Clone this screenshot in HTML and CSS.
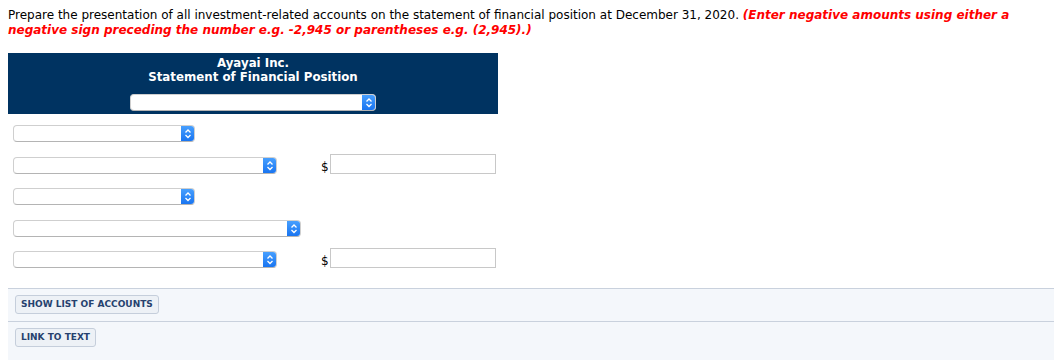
FILE: index.html
```html
<!DOCTYPE html>
<html lang="en">
<head>
    <meta charset="UTF-8">
    <title>Statement of Financial Position</title>
    <link rel="stylesheet" href="styles.css">
</head>
<body>
    <p class="instructions">
        Prepare the presentation of all investment-related accounts on the statement of financial position at December 31, 2020.
        <em class="hint">(Enter negative amounts using either a negative sign preceding the number e.g. -2,945 or parentheses e.g. (2,945).)</em>
    </p>

    <div class="statement">
        <div class="statement-head">
            <div class="company">Ayayai Inc.</div>
            <div class="title">Statement of Financial Position</div>
            <div class="select select-date"><span class="select-arrow"><svg viewBox="0 0 14 17"><path d="M4.5 7.5 7 5 9.5 7.5M4.5 10 7 12.5 9.5 10"/></svg></span></div>
        </div>

        <div class="rows">
            <div class="row">
                <div class="select w-sm"><span class="select-arrow"><svg viewBox="0 0 14 17"><path d="M4.5 7.5 7 5 9.5 7.5M4.5 10 7 12.5 9.5 10"/></svg></span></div>
            </div>
            <div class="row">
                <div class="select w-md"><span class="select-arrow"><svg viewBox="0 0 14 17"><path d="M4.5 7.5 7 5 9.5 7.5M4.5 10 7 12.5 9.5 10"/></svg></span></div>
                <span class="dollar">$</span>
                <input class="amount" type="text">
            </div>
            <div class="row">
                <div class="select w-sm"><span class="select-arrow"><svg viewBox="0 0 14 17"><path d="M4.5 7.5 7 5 9.5 7.5M4.5 10 7 12.5 9.5 10"/></svg></span></div>
            </div>
            <div class="row">
                <div class="select w-lg"><span class="select-arrow"><svg viewBox="0 0 14 17"><path d="M4.5 7.5 7 5 9.5 7.5M4.5 10 7 12.5 9.5 10"/></svg></span></div>
            </div>
            <div class="row">
                <div class="select w-md"><span class="select-arrow"><svg viewBox="0 0 14 17"><path d="M4.5 7.5 7 5 9.5 7.5M4.5 10 7 12.5 9.5 10"/></svg></span></div>
                <span class="dollar">$</span>
                <input class="amount" type="text">
            </div>
        </div>
    </div>

    <div class="toolbar">
        <div class="toolbar-row"><button class="tool-button">SHOW LIST OF ACCOUNTS</button></div>
        <div class="toolbar-row"><button class="tool-button">LINK TO TEXT</button></div>
    </div>
</body>
</html>
```

FILE: styles.css
```css
body {
    margin: 8px 0 0 8px;
    font-family: 'DejaVu Sans', Verdana, sans-serif;
    font-size: 12px;
    color: #000;
    background: #fff;
    overflow: hidden;
}

.instructions {
    margin: 0 8px 0 0;
    line-height: 15px;
}

.hint {
    color: #ff0000;
    font-weight: bold;
}

.statement {
    margin-top: 15px;
}

.statement-head {
    width: 490px;
    background: #003361;
    color: #fff;
    text-align: center;
    font-size: 11.8px;
    font-weight: bold;
    line-height: 14px;
    padding: 3px 0 3px;
    display: flex;
    flex-direction: column;
    align-items: center;
}

.select-date {
    width: 246px;
    margin-top: 10px;
}

/* mac style dropdown */
.select {
    box-sizing: border-box;
    height: 17px;
    background: #fff;
    border: 1px solid #cfcfcf;
    border-bottom-color: #b4b4b4;
    border-radius: 4px;
    display: flex;
    justify-content: flex-end;
    overflow: hidden;
}

.select-arrow {
    width: 14px;
    height: 17px;
    margin: -1px -1px 0 0;
    background: linear-gradient(#4aa2ff, #1672f0);
    border-radius: 0 4px 4px 0;
    display: flex;
}

.select-arrow svg {
    width: 14px;
    height: 17px;
    fill: none;
    stroke: #fff;
    stroke-width: 1.3;
}

.w-sm { width: 182px; }
.w-md { width: 264px; }
.w-lg { width: 288px; }

.rows {
    padding: 4px 0 0 5px;
}

.row {
    height: 31.5px;
    display: grid;
    grid-template-columns: 308px auto 166px;
    justify-content: start;
    align-items: center;
    justify-items: start;
}

.dollar {
    font-size: 12px;
    padding-top: 3px;
    padding-right: 1px;
}

.amount {
    box-sizing: border-box;
    width: 166px;
    height: 20px;
    margin: 0 0 3px 0;
    border: 1px solid #c8c8c8;
    padding: 0 3px;
    font: inherit;
}

.toolbar {
    margin-top: 12px;
    background: #f4f7fb;
    height: 80px;
}

.toolbar-row {
    border-top: 1px solid #c9d1dd;
    padding: 6px 7px;
    height: 20px;
}

.tool-button {
    box-sizing: border-box;
    height: 19px;
    padding: 0 5px;
    background: #edf1f6;
    border: 1px solid #c5cedb;
    border-radius: 3px;
    color: #26416e;
    font-family: 'DejaVu Sans', Verdana, sans-serif;
    font-size: 9px;
    font-weight: bold;
}
```
